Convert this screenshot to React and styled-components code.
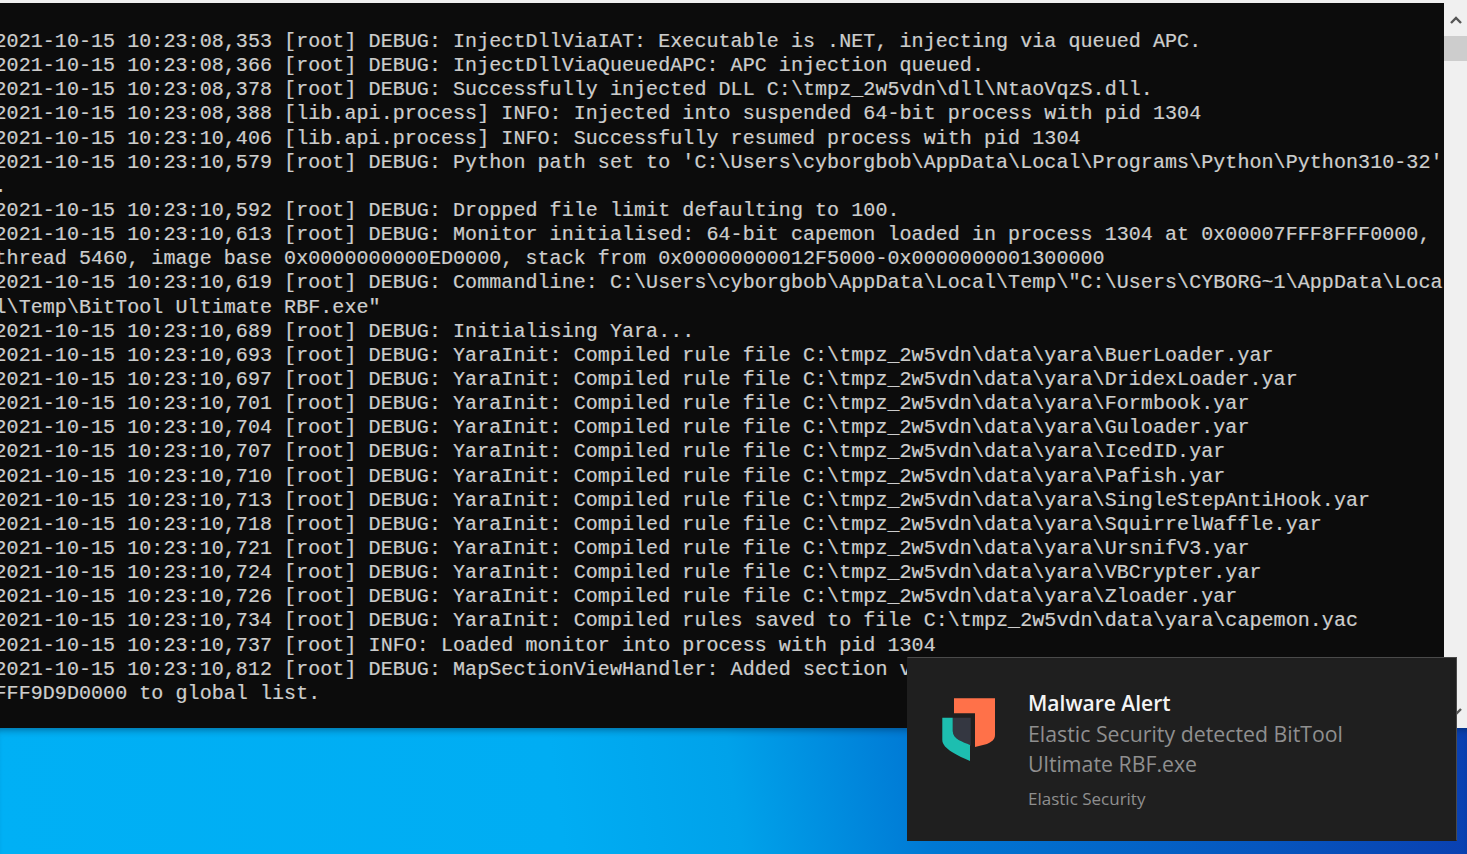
import React from 'react'
import styled, { createGlobalStyle } from 'styled-components'

const lines = [
  "2021-10-15 10:23:08,353 [root] DEBUG: InjectDllViaIAT: Executable is .NET, injecting via queued APC.",
  "2021-10-15 10:23:08,366 [root] DEBUG: InjectDllViaQueuedAPC: APC injection queued.",
  "2021-10-15 10:23:08,378 [root] DEBUG: Successfully injected DLL C:\\tmpz_2w5vdn\\dll\\NtaoVqzS.dll.",
  "2021-10-15 10:23:08,388 [lib.api.process] INFO: Injected into suspended 64-bit process with pid 1304",
  "2021-10-15 10:23:10,406 [lib.api.process] INFO: Successfully resumed process with pid 1304",
  "2021-10-15 10:23:10,579 [root] DEBUG: Python path set to 'C:\\Users\\cyborgbob\\AppData\\Local\\Programs\\Python\\Python310-32'",
  ".",
  "2021-10-15 10:23:10,592 [root] DEBUG: Dropped file limit defaulting to 100.",
  "2021-10-15 10:23:10,613 [root] DEBUG: Monitor initialised: 64-bit capemon loaded in process 1304 at 0x00007FFF8FFF0000,",
  "thread 5460, image base 0x0000000000ED0000, stack from 0x00000000012F5000-0x0000000001300000",
  "2021-10-15 10:23:10,619 [root] DEBUG: Commandline: C:\\Users\\cyborgbob\\AppData\\Local\\Temp\\\"C:\\Users\\CYBORG~1\\AppData\\Loca",
  "l\\Temp\\BitTool Ultimate RBF.exe\"",
  "2021-10-15 10:23:10,689 [root] DEBUG: Initialising Yara...",
  "2021-10-15 10:23:10,693 [root] DEBUG: YaraInit: Compiled rule file C:\\tmpz_2w5vdn\\data\\yara\\BuerLoader.yar",
  "2021-10-15 10:23:10,697 [root] DEBUG: YaraInit: Compiled rule file C:\\tmpz_2w5vdn\\data\\yara\\DridexLoader.yar",
  "2021-10-15 10:23:10,701 [root] DEBUG: YaraInit: Compiled rule file C:\\tmpz_2w5vdn\\data\\yara\\Formbook.yar",
  "2021-10-15 10:23:10,704 [root] DEBUG: YaraInit: Compiled rule file C:\\tmpz_2w5vdn\\data\\yara\\Guloader.yar",
  "2021-10-15 10:23:10,707 [root] DEBUG: YaraInit: Compiled rule file C:\\tmpz_2w5vdn\\data\\yara\\IcedID.yar",
  "2021-10-15 10:23:10,710 [root] DEBUG: YaraInit: Compiled rule file C:\\tmpz_2w5vdn\\data\\yara\\Pafish.yar",
  "2021-10-15 10:23:10,713 [root] DEBUG: YaraInit: Compiled rule file C:\\tmpz_2w5vdn\\data\\yara\\SingleStepAntiHook.yar",
  "2021-10-15 10:23:10,718 [root] DEBUG: YaraInit: Compiled rule file C:\\tmpz_2w5vdn\\data\\yara\\SquirrelWaffle.yar",
  "2021-10-15 10:23:10,721 [root] DEBUG: YaraInit: Compiled rule file C:\\tmpz_2w5vdn\\data\\yara\\UrsnifV3.yar",
  "2021-10-15 10:23:10,724 [root] DEBUG: YaraInit: Compiled rule file C:\\tmpz_2w5vdn\\data\\yara\\VBCrypter.yar",
  "2021-10-15 10:23:10,726 [root] DEBUG: YaraInit: Compiled rule file C:\\tmpz_2w5vdn\\data\\yara\\Zloader.yar",
  "2021-10-15 10:23:10,734 [root] DEBUG: YaraInit: Compiled rules saved to file C:\\tmpz_2w5vdn\\data\\yara\\capemon.yac",
  "2021-10-15 10:23:10,737 [root] INFO: Loaded monitor into process with pid 1304",
  "2021-10-15 10:23:10,812 [root] DEBUG: MapSectionViewHandler: Added section view with base 0x00007FFF9D9D0000",
  "FFF9D9D0000 to global list.",
]

const App = () => {
  return (
    <Screen>
      <GlobalStyle />
      <ConsoleWindow>
        <LogArea>
          {lines.map((line, i) => (
            <LogLine key={i}>{line}</LogLine>
          ))}
        </LogArea>
        <ScrollBar>
          <ScrollArrow>
            <svg width="12" height="8" viewBox="0 0 12 8">
              <path d="M1 7 L6 2 L11 7" fill="none" stroke="#555" strokeWidth="2.4" />
            </svg>
          </ScrollArrow>
          <ScrollThumb />
          <ScrollSpacer />
          <ScrollArrow>
            <svg width="12" height="8" viewBox="0 0 12 8">
              <path d="M1 1 L6 6 L11 1" fill="none" stroke="#555" strokeWidth="2.4" />
            </svg>
          </ScrollArrow>
        </ScrollBar>
      </ConsoleWindow>
      <Desktop />
      <Toast>
        <ShieldLogo viewBox="0 0 56 66">
          <path d="M13 1.3 H54 V38 C54 43 50 45 46 47 L34 50 V16.3 H13 Z" fill="#ff7149" />
          <path d="M11.7 20.7 H29.7 V48.7 C22 45 11.7 42 11.7 34 Z" fill="#343741" />
          <path d="M1.3 20.7 H11.7 V34 C11.7 42 22 45 29 48 V64 C18 59 1.3 52 1.3 43 Z" fill="#1dbeb0" />
        </ShieldLogo>
        <ToastBody>
          <ToastTitle>Malware Alert</ToastTitle>
          <ToastText>Elastic Security detected BitTool</ToastText>
          <ToastText>Ultimate RBF.exe</ToastText>
          <ToastSource>Elastic Security</ToastSource>
        </ToastBody>
      </Toast>
    </Screen>
  )
}

export default App

const GlobalStyle = createGlobalStyle`
  html, body {
    margin: 0;
    padding: 0;
    background: #f0f0f0;
    overflow: hidden;
  }
`

const Screen = styled.div`
  position: relative;
  width: 1467px;
  height: 854px;
  display: flex;
  flex-direction: column;
  padding-top: 3px;
  box-sizing: border-box;
  overflow: hidden;
`

const ConsoleWindow = styled.div`
  display: flex;
  height: 725px;
  background: #0c0c0c;
`

const LogArea = styled.div`
  flex: 1;
  min-width: 0;
  overflow: hidden;
  padding-top: 27px;
  margin-left: -5.5px;
`

const LogLine = styled.div`
  font-family: "Liberation Mono", "DejaVu Sans Mono", monospace;
  font-size: 20px;
  letter-spacing: 0.065px;
  line-height: 24.15px;
  height: 24.15px;
  color: #cccccc;
  white-space: pre;
  text-shadow: 0.5px 0 0.6px rgba(205, 150, 90, 0.35), -0.5px 0 0.6px rgba(90, 160, 225, 0.35);
`

const ScrollBar = styled.div`
  width: 23px;
  flex: none;
  display: flex;
  flex-direction: column;
  background: #f0f0f0;
`

const ScrollArrow = styled.div`
  height: 33px;
  display: flex;
  align-items: center;
  justify-content: center;
`

const ScrollThumb = styled.div`
  height: 25px;
  background: #cdcdcd;
`

const ScrollSpacer = styled.div`
  flex: 1;
`

const Desktop = styled.div`
  flex: 1;
  background: linear-gradient(82deg, #00b0f5 0%, #00adf3 38%, #00a2ea 50%, #0078d4 63%, #0a3fb0 100%);
  box-shadow: inset 0 7px 7px -5px rgba(0, 30, 60, 0.45);
`

const Toast = styled.div`
  position: absolute;
  left: 907px;
  top: 657px;
  width: 550px;
  height: 184px;
  box-sizing: border-box;
  background: #1f1f1f;
  border: 1px solid #4a4a4a;
  border-left-color: #1f1f1f;
  border-bottom-color: #1f1f1f;
  display: flex;
  align-items: flex-start;
  padding: 32px 0 0 33px;
  gap: 31px;
`

const ShieldLogo = styled.svg`
  width: 56px;
  height: 66px;
  flex: none;
  margin-top: 7px;
`

const ToastBody = styled.div`
  display: flex;
  flex-direction: column;
  font-family: "Open Sans", "Noto Sans", sans-serif;
`

const ToastTitle = styled.div`
  font-size: 21px;
  font-weight: 600;
  line-height: 26px;
  color: #f4f4f4;
  margin-bottom: 3px;
`

const ToastText = styled.div`
  font-size: 21.3px;
  line-height: 30px;
  color: #8f8f8f;
`

const ToastSource = styled.div`
  font-size: 17px;
  line-height: 24px;
  margin-top: 8px;
  color: #8f8f8f;
`
